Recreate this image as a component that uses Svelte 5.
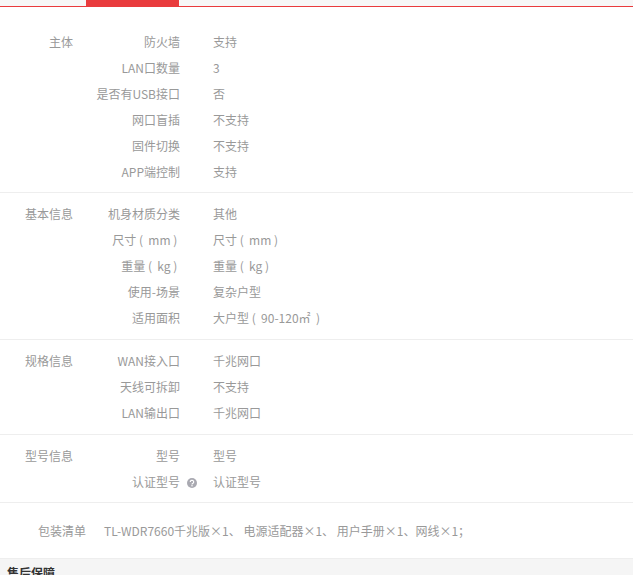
<script>
  // Spec groups shown under the product tab
  const groups = [
    {
      title: '主体',
      rows: [
        ['防火墙', '支持'],
        ['LAN口数量', '3'],
        ['是否有USB接口', '否'],
        ['网口盲插', '不支持'],
        ['固件切换', '不支持'],
        ['APP端控制', '支持']
      ]
    },
    {
      title: '基本信息',
      rows: [
        ['机身材质分类', '其他'],
        ['尺寸 (\u00a0\u00a0mm\u00a0)\u00a0', '尺寸 (\u00a0\u00a0mm\u00a0)'],
        ['重量 (\u00a0\u00a0kg\u00a0)\u00a0', '重量 (\u00a0\u00a0kg\u00a0)'],
        ['使用-场景', '复杂户型'],
        ['适用面积', '大户型 (\u00a0\u00a090-120㎡\u00a0\u00a0)']
      ]
    },
    {
      title: '规格信息',
      rows: [
        ['WAN接入口', '千兆网口'],
        ['天线可拆卸', '不支持'],
        ['LAN输出口', '千兆网口']
      ]
    },
    {
      title: '型号信息',
      rows: [
        ['型号', '型号'],
        ['认证型号', '认证型号', true]
      ]
    }
  ];
</script>

<div class="page">
  <div class="tabs">
    <div class="tab-active"></div>
  </div>

  {#each groups as group}
    <section class="group">
      <div class="group-title">{group.title}</div>
      <div class="rows">
        {#each group.rows as row}
          <div class="row">
            <div class="name">
              {row[0]}
              {#if row[2]}
                <svg class="help" viewBox="0 0 10 10" width="10" height="10">
                  <circle cx="5" cy="5" r="5" fill="#a9a9b1" />
                  <path d="M3.3 3.9a1.7 1.6 0 1 1 2.7 1.3c-.7.4-1 .6-1 1.2" fill="none" stroke="#fff" stroke-width="1.2" />
                  <circle cx="5" cy="7.8" r=".75" fill="#fff" />
                </svg>
              {/if}
            </div>
            <div class="value">{row[1]}</div>
          </div>
        {/each}
      </div>
    </section>
  {/each}

  <section class="package">
    <div class="package-title">包装清单</div>
    <div class="package-list">TL-WDR7660千兆版×1、 电源适配器×1、 用户手册×1、网线×1；</div>
  </section>

  <div class="after-sale">售后保障</div>
</div>

<style>
  :global(body) {
    margin: 0;
    background: #fff;
  }

  .page {
    height: 575px;
    overflow: hidden;
    font-family: "Noto Sans CJK SC", "Noto Sans", sans-serif;
    font-size: 12px;
    color: #999;
  }

  .tabs {
    height: 6px;
    background: #f7f7f7;
    border-bottom: 1px solid #e93b3d;
    padding-left: 86px;
  }

  .tab-active {
    width: 93px;
    height: 6px;
    background: #e93b3d;
  }

  .group {
    display: flex;
    padding: 8px 0;
    border-bottom: 1px solid #eee;
  }

  .group:first-of-type {
    padding: 22px 0 7px;
  }

  .group:nth-of-type(4) {
    padding-bottom: 7px;
  }

  .group-title {
    width: 73px;
    text-align: right;
    line-height: 26px;
  }

  .rows {
    flex: 1;
  }

  .row {
    display: flex;
    height: 26px;
    line-height: 26px;
  }

  .name {
    position: relative;
    width: 107px;
    text-align: right;
    white-space: nowrap;
  }

  .value {
    margin-left: 33px;
    white-space: nowrap;
  }

  .help {
    position: absolute;
    left: 114px;
    top: 9px;
  }

  .package {
    display: flex;
    height: 55px;
    align-items: center;
  }

  .package-title {
    width: 86px;
    text-align: right;
  }

  .package-list {
    margin-left: 18px;
    white-space: nowrap;
  }

  .after-sale {
    height: 30px;
    padding-left: 7px;
    line-height: 28px;
    background: #f5f5f5;
    border-top: 1px solid #eee;
    font-weight: 700;
    color: #333;
  }
</style>
